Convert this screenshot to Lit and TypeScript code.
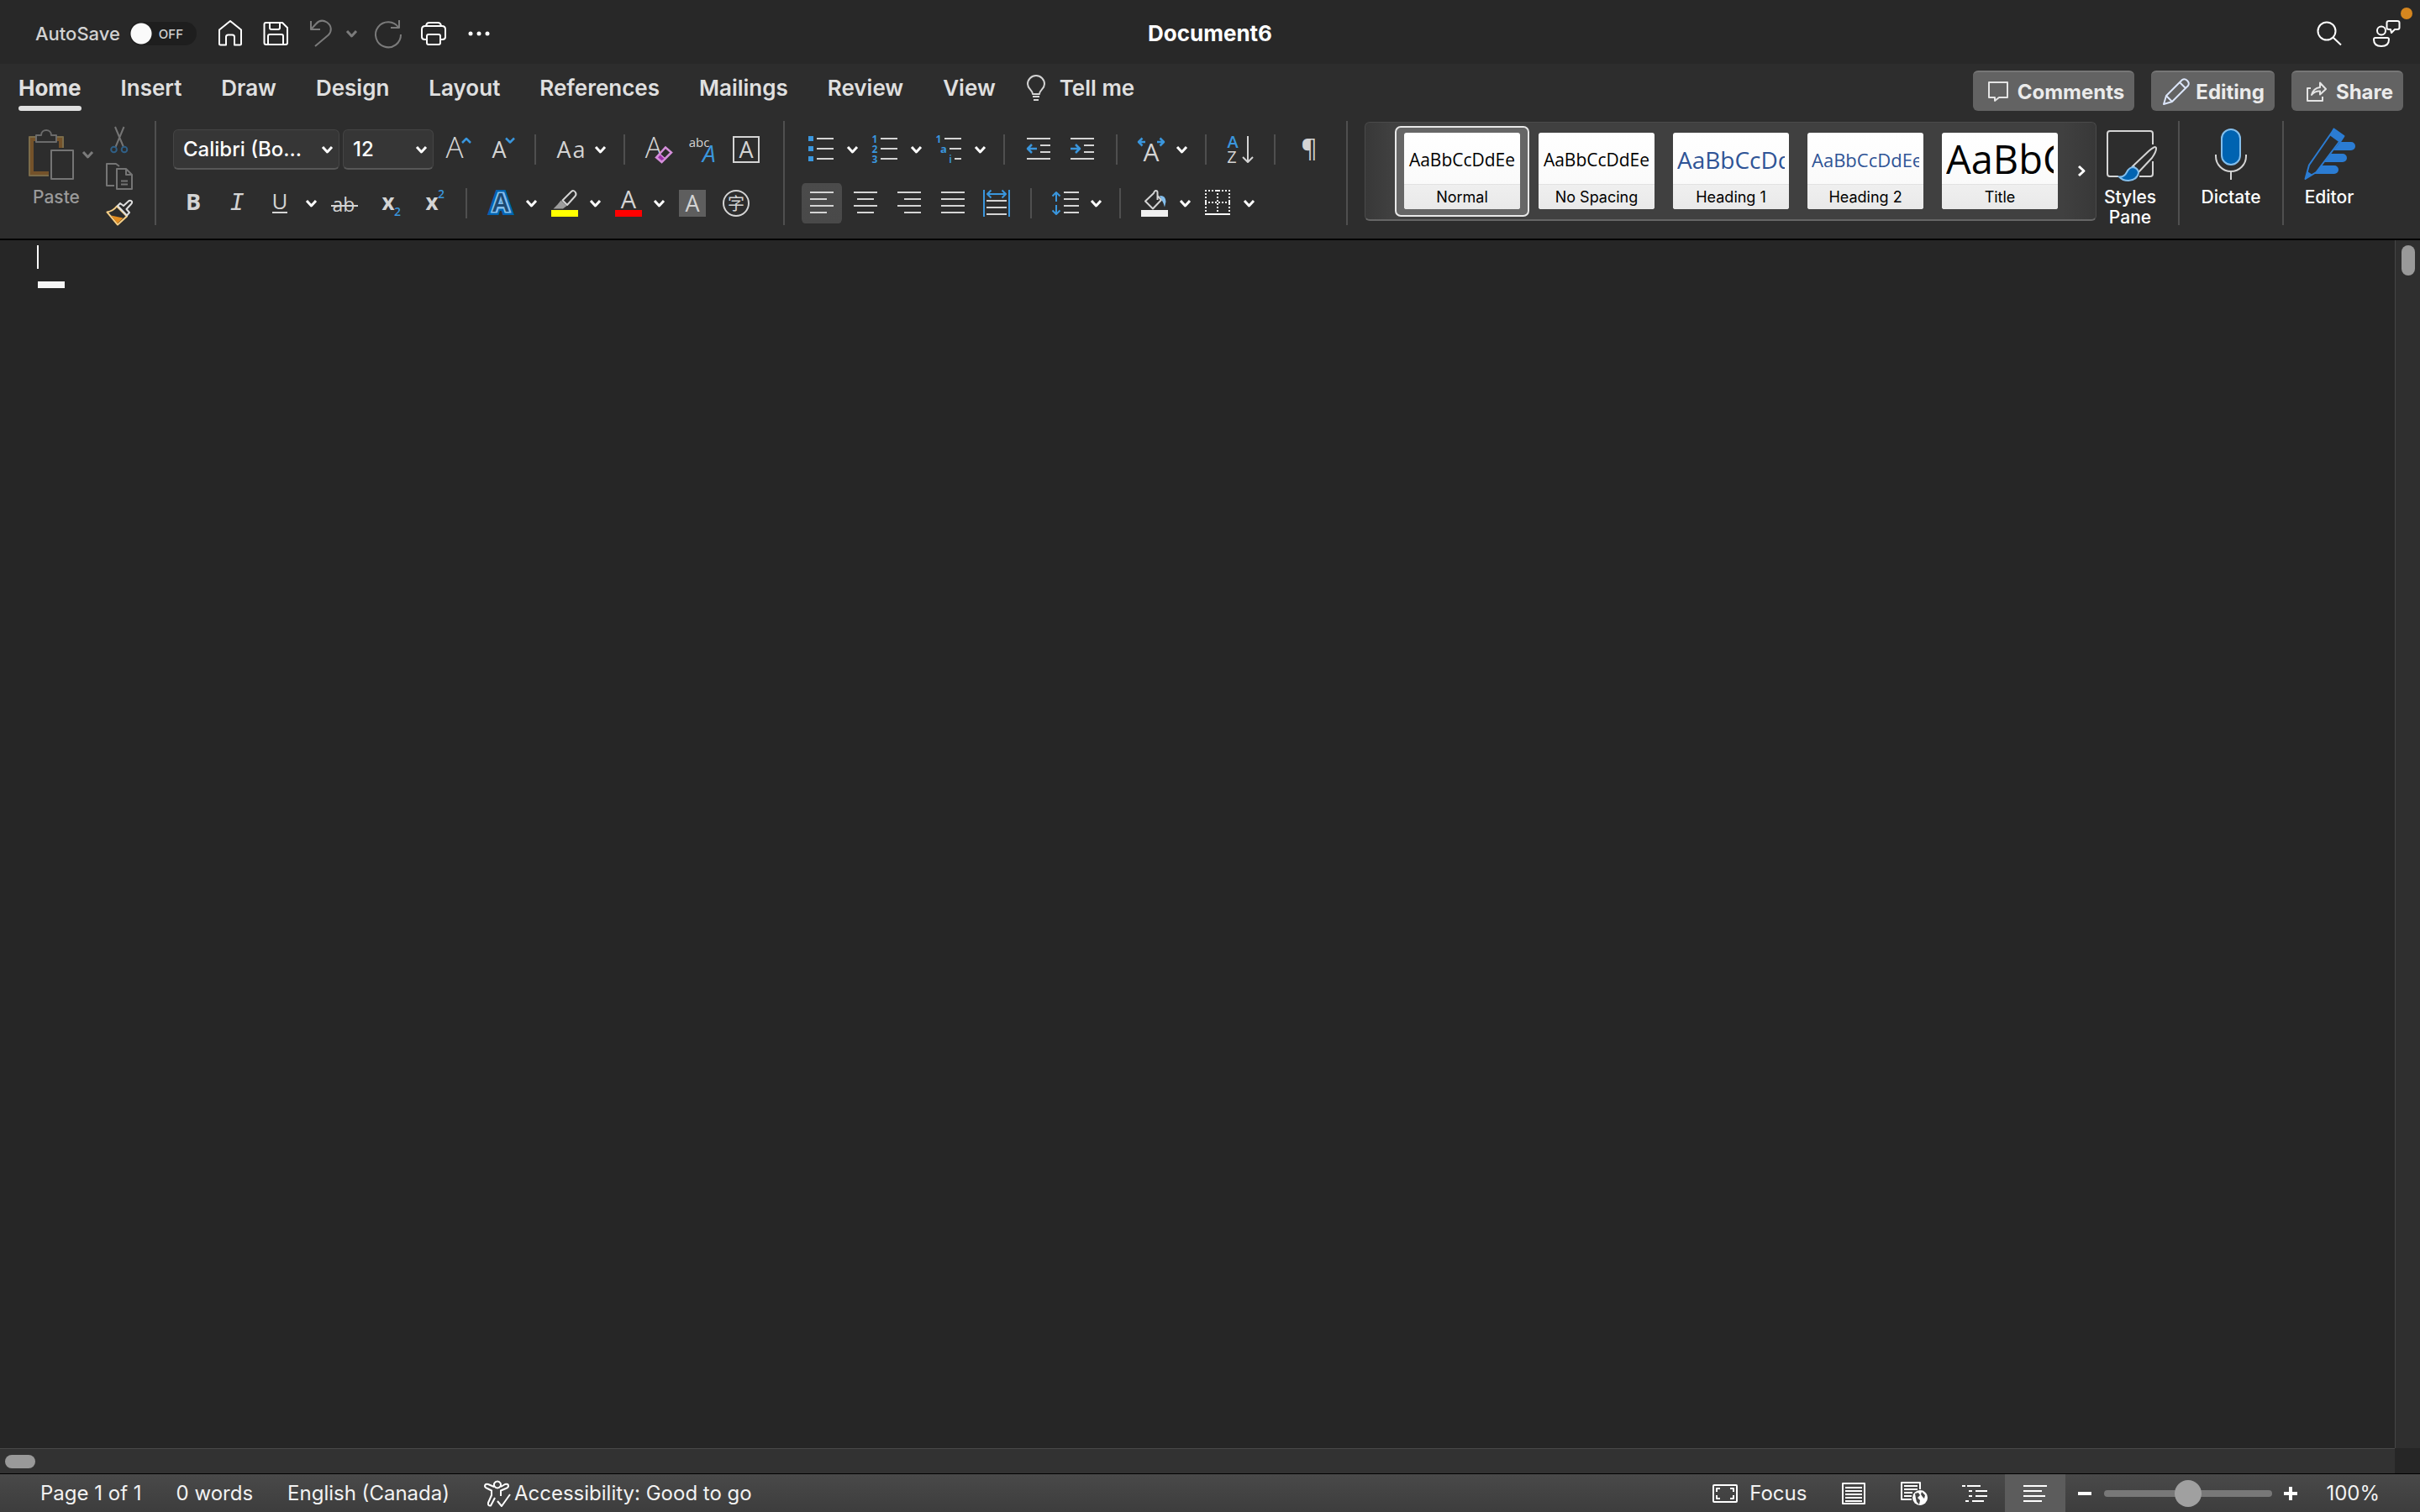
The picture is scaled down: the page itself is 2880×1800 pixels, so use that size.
import { LitElement, html, css, svg, nothing, type TemplateResult, type SVGTemplateResult } from "lit";
import { customElement, property, state } from "lit/decorators.js";
import { classMap } from "lit/directives/class-map.js";

const LIGHT = "#d4d4d4";
const BLUE = "#3a96dd";
const DIM = "#7b7b7b";

interface Glyph {
  w: number;
  h: number;
  body: SVGTemplateResult;
}

const glyph = (body: SVGTemplateResult, w = 32, h = 32): Glyph => ({ w, h, body });

const stroke = (d: string, color = LIGHT, width = 2) =>
  svg`<path d=${d} fill="none" stroke=${color} stroke-width=${width} stroke-linejoin="round"></path>`;

const letter = (t: string, x: number, y: number, size: number, color = LIGHT, weight = 400, anchor = "middle") =>
  svg`<text x=${x} y=${y} font-size=${size} fill=${color} font-weight=${weight} text-anchor=${anchor}>${t}</text>`;

const GLYPHS: Record<string, Glyph> = {
  home: glyph(stroke("M16 1L29 11.5V28Q29 29.5 27.5 29.5H21V20Q21 17.5 18.5 17.5H13.5Q11 17.5 11 20V29.5H4.5Q3 29.5 3 28V11.5Z", "#fff")),
  save: glyph(stroke("M4.500 3H24L30 9V27Q30 29 28 29H4.500Q2.500 29 2.500 27V5Q2.500 3 4.500 3ZM9 3V9Q9 11 11 11H19Q21 11 21 9V3M7 29V19Q7 17 9 17H23Q25 17 25 19V29", "#fff")),
  undo: glyph(stroke("M4 1V11H15M4 11L10 4.500C14 0 19 0 23 2.500C29 6.500 29 13 25 17.500L9 31", DIM)),
  redo: glyph(stroke("M29 0V9H19M28.500 9A15 15 0 1 0 31 17", DIM)),
  print: glyph(stroke("M8 23H5.500Q2 23 2 20V11Q2 7 6 7H26Q30 7 30 11V20Q30 23 26.500 23H24M7 7Q7.500 3 11 3H21Q24.500 3 25 7M10 17H22Q24 17 24 19V27Q24 29 22 29H10Q8 29 8 27V19Q8 17 10 17Z", "#fff")),
  more: glyph(svg`<g fill="#fff"><circle cx="6" cy="16" r="2.500"></circle><circle cx="16" cy="16" r="2.500"></circle><circle cx="26" cy="16" r="2.500"></circle></g>`),
  search: glyph(svg`<circle cx="13" cy="13" r="10.500" fill="none" stroke="#fff" stroke-width="2"></circle>${stroke("M20.500 20.500L30 29.500", "#fff", 2)}`),
  presence: glyph(svg`<circle cx="10" cy="12.500" r="5" fill="none" stroke="#fff" stroke-width="2"></circle>${stroke("M3 21H17Q19 21 19 23Q19 31 10 31Q1 31 1 23Q1 21 3 21ZM19 1H29Q31.500 1 31.500 3V9Q31.500 11 29 11H26L22 15L21 11H19Q16.500 11 16.500 9V3Q16.500 1 19 1Z", "#fff")}`),
  bulb: glyph(svg`${stroke("M8 23C8 18 2 17 2 11A10 10 0 0 1 22 11C22 17 16 18 16 23Z")}${stroke("M8 26H16M9 30H15", LIGHT, 2)}`, 24),
  comment: glyph(stroke("M1 1H23V19H13L8 23V19H1Z", "#e4e4e4"), 24, 24),
  pencil: glyph(stroke("M1 31L4 21L23 2Q26 0 29 3Q32 6 30 9L11 28ZM4 21L11 28M20 5L27 12", "#dce6fa")),
  share: glyph(stroke("M5 8H1V23H19V18M6 16Q8 8 16 7V1.500L23 9L16 15.500V11.500Q10 11 6 16Z", "#e4e4e4"), 24, 24),

  paste: glyph(svg`${stroke("M9 9H1V55H24M33 9H41V22", "#7b6c4a", 2)}
    <path d="M9 12H4V52H24M33 12H38V22" fill="none" stroke="#74522a" stroke-width="4"></path>
    ${stroke("M9 7H15C15 -1 27 -1 27 7H33V15H9Z", "#6b6b6b")}
    ${stroke("M27 25H53V59H27Z", "#757575")}`, 54, 60),
  cut: glyph(svg`${stroke("M11 1L21 25M21.500 1L11.500 25", "#757575")}
    <g fill="none" stroke="#2f5f86" stroke-width="2"><circle cx="9.500" cy="28" r="3.300"></circle><circle cx="22" cy="28" r="3.300"></circle></g>`),
  copy: glyph(stroke("M10 27H1V1H12L16 4M13 7H24L31 14V31H13ZM24 7V14H31M18 21.500H26M18 25.500H26", "#757575")),
  painter: glyph(svg`${stroke("M1.500 14.500Q9 13 13 7.500L25 19.500L14 29.500Z", "#f7cf86", 2)}
    <path d="M6 18.500L20.500 21.500L14 28Z" fill="#e28c1f"></path>
    <path d="M14 7L17 4L21 7L27.500 1Q30 0 31 2Q31.500 3.500 30 5L24.500 11L28 15L25 18.500Z" fill="#2d2d2d" stroke="#dedede" stroke-width="2" stroke-linejoin="round"></path>`),

  grow: glyph(svg`${letter("A", 13, 25.5, 35, LIGHT, 300)}${stroke("M22 8L27 3L32 8", BLUE, 2.5)}`),
  shrink: glyph(svg`${letter("A", 14, 25.5, 27)}${stroke("M22 2.500L27 7.500L32 2.500", BLUE, 2.5)}`),
  changeCase: glyph(svg`${letter("A", 9, 25.5, 27)}${letter("a", 27, 25.5, 27)}`),
  clear: glyph(svg`${letter("A", 10, 25.5, 34, LIGHT, 300)}
    <path d="M13 25.500L24 13.500L31 19.500L19.500 31Z" fill="#2d2d2d" stroke="#d58fdb" stroke-width="2.500"></path>
    <path d="M14 25.500L17.500 21.500L23.500 27L19.500 30Z" fill="#9b2fa8" stroke="#d58fdb" stroke-width="1.500"></path>`),
  phonetic: glyph(svg`${letter("abc", 12, 13, 15)}<text x="16" y="31" font-size="28" fill=${BLUE} font-style="italic">A</text>`),
  charBorder: glyph(svg`<rect x="1" y="1" width="30" height="30" fill="none" stroke=${LIGHT} stroke-width="2"></rect>${letter("A", 16, 25.5, 27)}`),
  bold: glyph(letter("B", 16, 24, 27, LIGHT, 700)),
  italic: glyph(svg`<text x="16" y="24" font-size="29" fill=${LIGHT} text-anchor="middle" font-style="italic" font-family="Liberation Mono">I</text>`),
  underline: glyph(svg`${letter("U", 15, 23, 26)}${stroke("M6 27H24")}`),
  strike: glyph(svg`${letter("ab", 15, 25.5, 23)}${stroke("M0 19H32")}`),
  sub: glyph(svg`${letter("x", 16, 24, 26, LIGHT, 700)}${letter("2", 27, 31, 14, BLUE, 600)}`),
  sup: glyph(svg`${letter("x", 16, 24, 26, LIGHT, 700)}${letter("2", 27, 10, 14, BLUE, 600)}`),
  effects: glyph(svg`<g font-size="30" font-weight="700" text-anchor="middle" stroke-linejoin="miter">
    <text x="16" y="26" fill="#0063b1" stroke="#0063b1" stroke-width="8">A</text>
    <text x="16" y="26" fill="#83beec" stroke="#83beec" stroke-width="3">A</text>
    <text x="16" y="26" font-weight="600" fill="#1d4a73">A</text></g>`),
  highlight: glyph(svg`<rect y="24" width="32" height="8" fill="#ffff00"></rect>
    ${stroke("M13.500 12.500L24 2Q26.500 0 28.500 2.500Q30.500 5 28.500 7.500L19 18Z")}
    <path d="M11.500 12.500L18.500 19L14 22.500H2.500L7.500 17.500Z" fill="#9c9c9c"></path>`),
  fontColor: glyph(svg`<rect y="24" width="32" height="8" fill="#ff0000"></rect>${letter("A", 16, 21.5, 29)}`),
  shadeChar: glyph(svg`<rect width="32" height="32" fill="#5e5e5e"></rect>${letter("A", 16, 25.5, 27)}`),
  enclose: glyph(svg`<circle cx="16" cy="16" r="15" fill="none" stroke=${LIGHT} stroke-width="2"></circle>
    <text x="16" y="23.500" font-size="20" fill=${LIGHT} text-anchor="middle" font-family="Noto Sans CJK SC">字</text>`),

  bullets: glyph(svg`<path d="M0 0h6v6h-6zM0 12h6v6h-6zM0 24h6v6h-6z" fill=${BLUE}></path>${stroke("M10 3H30M10 15H30M10 27H30")}`),
  numbers: glyph(svg`${letter("1", 3, 8, 12, BLUE, 700)}${letter("2", 3, 20, 12, BLUE, 700)}${letter("3", 3, 32, 12, BLUE, 700)}${stroke("M10 3H30M10 15H30M10 27H30")}`),
  multilevel: glyph(svg`${letter("1", 3, 8, 12, BLUE, 700)}${letter("a", 9, 20, 13, BLUE, 700)}${letter("i", 17, 32, 13, BLUE, 600)}${stroke("M10 3H30M16 15H30M22 27H30")}`),
  outdent: glyph(svg`${stroke("M2 3H30M18 11H30M18 19H30M2 27H30")}${stroke("M14 15H3M8 10L3 15L8 20", BLUE, 2.5)}`),
  indent: glyph(svg`${stroke("M2 3H30M18 11H30M18 19H30M2 27H30")}${stroke("M2 15H13M8 10L13 15L8 20", BLUE, 2.5)}`),
  asian: glyph(svg`${letter("A", 16, 30, 30)}${stroke("M9 7H1.500M5.500 2.500L1 7L5.500 11.500M23 7H30.500M26.500 2.500L31 7L26.500 11.500", BLUE, 2.5)}`),
  sort: glyph(svg`${letter("A", 7, 14, 20, BLUE, 600)}${letter("Z", 6, 32, 20)}${stroke("M25 0V31M19 25L25 31L31 25")}`),
  marks: glyph(letter("¶", 16, 25, 30)),
  left: glyph(stroke("M2 3H30M2 11H22M2 19H30M2 27H22")),
  center: glyph(stroke("M2 3H30M6 11H26M2 19H30M6 27H26")),
  right: glyph(stroke("M2 3H30M10 11H30M2 19H30M10 27H30")),
  justify: glyph(stroke("M2 3H30M2 11H30M2 19H30M2 27H30")),
  distribute: glyph(svg`${stroke("M4 13H28M4 21H28M4 29H28")}${stroke("M1 0V32M31 0V32M5 5H27M9.500 0.500L5 5L9.500 9.500M22.500 0.500L27 5L22.500 9.500", BLUE)}`),
  spacing: glyph(svg`${stroke("M14 3H32M14 11H32M14 19H32M14 27H32")}${stroke("M5 14V3M0.500 7.500L5 3L9.500 7.500M5 18V29M0.500 24.500L5 29L9.500 24.500", BLUE)}`),
  shading: glyph(svg`<rect y="24" width="32" height="8" fill="#f0f0f0"></rect>
    ${stroke("M19.500 12V3Q19.500 1 17.500 1Q16 1 15 4L5 13.500L14 22.500L24 12L19.500 7")}
    <path d="M22 7Q29 6 29.500 14L28 20.500Q26.500 15 24.500 12Z" fill="#83beec"></path>`),
  borders: glyph(svg`<path d="M0 1H30M0 15H30M1 0V28M15 0V28M29 0V28" fill="none" stroke="#f0f0f0" stroke-width="2" stroke-dasharray="2 2"></path>${stroke("M0 29H30", "#fff")}`),

  stylesPane: glyph(svg`${stroke("M14 55H4Q1 55 1 52V4Q1 1 4 1H52Q55 1 55 4V17M55 37V52Q55 55 52 55H39")}
    ${stroke("M30 44L50 25Q58 18 59 21Q59.500 25 54 33L38 50M32 43L38 50")}
    <path d="M15 55.500Q21 56 24 50Q27 44 32 44Q38 46 38 51Q36 59.500 26 60Q19 60 15 55.500Z" fill="#0063b1" stroke="#83beec" stroke-width="2"></path>`, 56, 60),
  mic: glyph(svg`<rect x="19" y="-1" width="22" height="42" rx="11" fill="#0063b1" stroke="#83beec" stroke-width="2"></rect>${stroke("M12 29V31A18 18 0 0 0 48 31V29M30 49V59")}`, 60, 60),
  editor: glyph(svg`<g fill="#2b7cd3"><path d="M43 14H56A5 5 0 0 1 56 24H35ZM32 28H46A5 5 0 0 1 46 38H24ZM21 42H36A5 5 0 0 1 36 52H11Z"></path></g>
    <path d="M34 2L6 41.500L2 57.500L14.500 50L43 13L33 5" fill="#2d2d2d"></path>
    ${stroke("M35.500 -1L6 41.500L1.500 58L14.500 50L47 7", "#2b7cd3", 2)}
    <path d="M4 49L10 53L1 59Z" fill="#2b7cd3"></path>
    <path d="M35.500 -1.500L47.500 7L43 14L32 6Z" fill="#2b7cd3" stroke="#2b7cd3" stroke-width="2" stroke-linejoin="round"></path>`, 60, 60),

  access: glyph(stroke("M16 1.500A4 4 0 1 1 15.900 1.500M12 8L5 5Q1.500 4 1 7Q1 9 4 10L9 12.500V18L5 27Q4.500 31 8 30.500L13 21M20 8L25 5Q29 4 29 7Q29 9 26 10L20 12.500V19M16 25L21 31L31 17", "#fff")),
  focus: glyph(svg`<rect x="1" y="2" width="28" height="20" rx="1" fill="none" stroke="#fff" stroke-width="2"></rect>${stroke("M5 10V6H9M21 6H25V10M25 14V18H21M9 18H5V14", "#fff")}`, 30, 24),
  pageView: glyph(stroke("M1 1H27V25H1ZM4 6H24M4 10H24M4 14H24M4 18H24M4 22H24", "#fff"), 28, 26),
  webView: glyph(svg`${stroke("M13 21H1V1H23V9M4 5H20M4 9H20M4 13H14M4 17H13", "#fff")}
    <circle cx="23" cy="19" r="9" fill="#fff"></circle><path d="M17 14L21 13L23 16L20 19L23 22L22 27L19 24L18 20ZM25 12L29 16L28 20L26 18L24 15Z" fill="#444"></path>`, 32, 28),
  outlineView: glyph(stroke("M0 1H4M6 1H22M8 7H12M16 7H30M8 13H12M16 13H30M4 19H8M12 19H26", "#fff"), 30, 20),
  draftView: glyph(stroke("M0 1H28M0 7H22M0 13H26M0 19H22", "#fff"), 28, 20),
  minus: glyph(stroke("M1 8H17", "#fff", 4), 18, 16),
  plus: glyph(stroke("M0 8H16M8 0V16", "#fff", 4), 16, 16),
  next: glyph(stroke("M1 1L7 6.500L1 12", "#fff", 3), 9, 13),
};

/** Draws one named glyph at its natural size. */
@customElement("word-icon")
export class WordIcon extends LitElement {
  @property() name = "";

  static styles = css`
    :host { display: block; flex: none; }
    .glyph { display: block; overflow: visible; font-family: "Open Sans", "Noto Sans", sans-serif; }
  `;

  render() {
    const g = GLYPHS[this.name];
    if (!g) return nothing;
    return html`<svg class="glyph" width=${g.w} height=${g.h} viewBox="0 0 ${g.w} ${g.h}" aria-hidden="true">${g.body}</svg>`;
  }
}

/** The small arrow of a drop-down control. */
@customElement("word-chevron")
export class WordChevron extends LitElement {
  static styles = css`
    :host { display: block; flex: none; color: #fff; }
    .glyph { display: block; overflow: visible; }
  `;

  render() {
    return html`<svg class="glyph" width="12" height="10" viewBox="0 0 12 10" aria-hidden="true">
      <path d="M1 2L6.500 8L12 2" fill="none" stroke="currentColor" stroke-width="3" stroke-linejoin="round"></path></svg>`;
  }
}

interface Command {
  icon: string;
  label: string;
  menu?: boolean;
  pressed?: boolean;
}

const cmd = (icon: string, label: string): Command => ({ icon, label });
const menu = (icon: string, label: string): Command => ({ icon, label, menu: true });

const TABS = ["Home", "Insert", "Draw", "Design", "Layout", "References", "Mailings", "Review", "View"];

const FONT_TOP = [
  [cmd("grow", "Increase font size"), cmd("shrink", "Decrease font size")],
  [menu("changeCase", "Change case")],
  [cmd("clear", "Clear formatting"), cmd("phonetic", "Phonetic guide"), cmd("charBorder", "Character border")],
];
const FONT_BOTTOM = [
  [cmd("bold", "Bold"), cmd("italic", "Italic"), menu("underline", "Underline"), cmd("strike", "Strikethrough"), cmd("sub", "Subscript"), cmd("sup", "Superscript")],
  [menu("effects", "Text effects"), menu("highlight", "Highlight"), menu("fontColor", "Font color"), cmd("shadeChar", "Character shading"), cmd("enclose", "Enclose characters")],
];
const PARA_TOP = [
  [menu("bullets", "Bullets"), menu("numbers", "Numbering"), menu("multilevel", "Multilevel list")],
  [cmd("outdent", "Decrease indent"), cmd("indent", "Increase indent")],
  [menu("asian", "Asian layout")],
  [cmd("sort", "Sort")],
  [cmd("marks", "Show formatting marks")],
];
const PARA_BOTTOM = [
  [
    { icon: "left", label: "Align left", pressed: true },
    cmd("center", "Center"), cmd("right", "Align right"), cmd("justify", "Justify"), cmd("distribute", "Distribute"),
  ],
  [menu("spacing", "Line spacing")],
  [menu("shading", "Shading"), menu("borders", "Borders")],
];

const STYLES = [
  { name: "Normal", sample: "AaBbCcDdEe", look: "body" },
  { name: "No Spacing", sample: "AaBbCcDdEe", look: "body" },
  { name: "Heading 1", sample: "AaBbCcDdEe", look: "h1" },
  { name: "Heading 2", sample: "AaBbCcDdEe", look: "h2" },
  { name: "Title", sample: "AaBbCcDdEe", look: "title" },
];

const VIEWS = [cmd("pageView", "Print layout"), cmd("webView", "Web layout"), cmd("outlineView", "Outline"), cmd("draftView", "Draft")];

@customElement("app-root")
export class AppRoot extends LitElement {
  @state() private tab = "Home";
  @state() private style_ = "Normal";
  @state() private view = "draftView";
  @state() private autosave = false;

  static styles = css`
    :host {
      display: flex;
      flex-direction: column;
      min-height: 100vh;
      background: #262626;
      color: #e0e0e0;
      font-family: Inter, "Liberation Sans", sans-serif;
      font-size: 24px;
    }
    * { box-sizing: border-box; }
    button, select, input { font: inherit; color: inherit; margin: 0; }
    button { display: flex; align-items: center; padding: 0; border: 0; background: none; }

    .titlebar {
      display: grid;
      grid-template-columns: 1fr auto 1fr;
      align-items: center;
      height: 76px;
      padding: 4px 24px 0;
      background: #282828;
    }
    .quick { display: flex; align-items: center; gap: 22px; padding-left: 18px; }
    .autosave { display: grid; grid-template-columns: 112px 80px; align-items: center; color: #d2d2d2; font-size: 22px; font-weight: 500; margin-right: 2px; }
    .switch {
      appearance: none;
      grid-area: 1 / 2;
      width: 80px;
      height: 28px;
      border-radius: 14px;
      background: radial-gradient(circle at 14px 14px, #fafafa 12px, transparent 13px), #1e1e1e;
    }
    .switch:checked { background: radial-gradient(circle at 66px 14px, #fafafa 12px, transparent 13px), #2b7cd3; }
    .off { grid-area: 1 / 2; justify-self: end; padding-right: 16px; font-size: 15px; pointer-events: none; }
    .undo { display: flex; align-items: center; gap: 14px; }
    .undo word-chevron, .dim word-chevron { color: #7b7b7b; }
    .docname { margin: 0; color: #fff; font-size: 26px; line-height: 32px; font-weight: 700; }
    .account { display: flex; justify-content: flex-end; gap: 36px; }
    .presence { position: relative; }
    .badge { position: absolute; top: -15px; right: -15px; width: 14px; height: 14px; border-radius: 7px; background: #d5861e; }

    .tabbar { display: flex; align-items: flex-start; height: 64px; padding: 0 20px 0 22px; background: #2d2d2d; }
    .tabs { display: flex; gap: 47px; }
    .tab { flex-direction: column; gap: 5px; padding-top: 13px; font-size: 26px; line-height: 32px; font-weight: 600; }
    .tab::after { content: ""; width: 100%; height: 6px; border-radius: 3px; }
    .tab.current { font-weight: 700; }
    .tab.current::after { background: #e0e0e0; }
    .tellme { gap: 16px; margin-left: 36px; padding-top: 13px; font-size: 26px; line-height: 32px; font-weight: 600; }
    .actions { display: flex; gap: 20px; margin: 8px 0 0 auto; }
    .action {
      height: 48px;
      gap: 11px;
      padding: 0 12px 0 18px;
      border-top: 2px solid #777;
      border-radius: 6px;
      background: #636363;
      color: #ebebeb;
      font-size: 24px;
      font-weight: 700;
    }
    .action.snug { gap: 7px; padding-left: 14px; }

    .ribbon { display: flex; height: 146px; padding: 4px 0 16px; border-bottom: 2px solid #000; background: #2d2d2d; }
    .rule { flex: none; width: 2px; background: #4f4f4f; }
    .clipboard { display: flex; gap: 16px; padding: 6px 26px 0 34px; }
    .paste { flex-direction: column; align-items: flex-start; gap: 9px; padding-top: 4px; color: #9a9a9a; font-size: 21px; line-height: 24px; font-weight: 500; justify-content: flex-start; }
    .paste-top { display: flex; align-items: center; gap: 10px; }
    .paste-label { width: 66px; text-align: center; }
    .stack { display: flex; flex-direction: column; gap: 12px; }
    .group { display: flex; flex-direction: column; gap: 16px; padding: 10px 18px 0; }
    .row { display: flex; align-items: center; height: 48px; }
    .cluster { display: flex; }
    .sep { width: 2px; height: 36px; margin: 0 14px; background: #4f4f4f; }
    .tool { height: 48px; padding: 0 10px; gap: 14px; border-radius: 6px; }
    .tool.menu { padding-right: 8px; }
    .tool.pressed { background: linear-gradient(#4b4b4b, #494949); background-clip: content-box; padding: 0 2px; }
    .tool.pressed word-icon { margin: 8px; }

    .combo { display: grid; align-items: center; }
    .combo select {
      appearance: none;
      grid-area: 1 / 1;
      width: 100%;
      height: 48px;
      padding: 0 32px 0 11px;
      border: 1px solid #454545;
      border-bottom: 2px solid #575757;
      border-radius: 6px;
      background: #363636;
      color: #fff;
      font-size: 24px;
      font-weight: 500;
    }
    .combo word-chevron { grid-area: 1 / 1; justify-self: end; padding-right: 9px; pointer-events: none; }
    .combo.font { width: 198px; margin: 0 4px 0 2px; }
    .combo.size { width: 108px; margin-right: 2px; }

    .gallery {
      display: flex;
      flex: 1;
      min-width: 0;
      height: 118px;
      margin: 1px 0 0 20px;
      padding-left: 35px;
      align-items: center;
      border: 1px solid #4a4a4a;
      border-bottom: 2px solid #666;
      border-radius: 6px;
      background: linear-gradient(90deg, #383838, #404040 30px, #404040 830px, #383838);
    }
    .style { width: 160px; height: 108px; padding: 7px 9px; border: 2px solid transparent; border-radius: 7px; flex: none; }
    .style.chosen { border-color: #e8e8e8; background: #666; }
    .card { display: grid; grid-template-rows: 61px 30px; width: 138px; border-radius: 3px; background: linear-gradient(#fff, #f8f8f8); color: #000; overflow: hidden; font-size: 18px; }
    .sample { display: flex; align-items: center; margin: 0 5px; padding-top: 2px; overflow: hidden; font-family: "Open Sans", "Noto Sans", sans-serif; white-space: nowrap; }
    .sample.body { justify-content: center; font-size: 21px; }
    .sample.h1 { font-size: 28px; color: #2f5496; }
    .sample.h2 { font-size: 22px; color: #2f5496; }
    .sample.title { padding-top: 0; font-size: 47px; }
    .caption { display: grid; place-items: center; border-top: 1px solid #e2e2e2; background: linear-gradient(#efefef, #e9e9e9); }
    .next { flex: 1; align-self: stretch; justify-content: center; }

    .big { flex-direction: column; justify-content: flex-start; gap: 8px; padding-top: 11px; color: #fff; font-size: 21px; line-height: 24px; font-weight: 500; }
    .big.pane { width: 80px; margin-right: 17px; }
    .big.dictate { width: 122px; }
    .big.editor { width: 108px; margin-right: 54px; }

    .workspace { display: grid; flex: 1; grid-template-columns: minmax(0, 1fr) 30px; grid-template-rows: minmax(0, 1fr) 30px; }
    .page { padding: 6px 0 0 44px; outline: none; }
    .caret { width: 2px; height: 28px; background: #fff; }
    .endmark { width: 32px; height: 8px; margin: 15px 0 0 1px; background: #f5f5f5; }
    .vscroll { padding: 6px 6px 0 7px; border-left: 1px solid #454545; background: #2f2f2f; }
    .hscroll { padding: 7px 0 0 6px; border-top: 1px solid #484848; background: #323232; }
    .vscroll .thumb { width: 16px; height: 36px; border-radius: 8px; background: #999; }
    .hscroll .thumb { width: 36px; height: 16px; border-radius: 8px; background: #999; }

    .status { display: flex; align-items: center; height: 46px; padding: 0 48px; border-top: 1px solid #000; background: linear-gradient(#494949, #3d3d3d); color: #f2f2f2; }
    .facts { display: flex; align-items: center; gap: 41px; }
    .fact { gap: 4px; }
    .focus { gap: 14px; margin: 0 20px 0 auto; }
    .views { display: flex; align-self: stretch; }
    .view { width: 72px; justify-content: center; }
    .view.on { background: #5c5c5c; }
    .zoom { display: flex; align-items: center; gap: 14px; margin-left: 14px; }
    .zoom input { appearance: none; width: 200px; height: 32px; background: none; }
    .zoom input::-webkit-slider-runnable-track { height: 8px; border-radius: 4px; background: #787878; }
    .zoom input::-webkit-slider-thumb { appearance: none; width: 32px; height: 32px; margin-top: -12px; border-radius: 16px; background: #a0a0a0; }
    .percent { margin-left: 34px; }
  `;

  private tool(c: Command): TemplateResult {
    return html`<button class=${classMap({ tool: true, menu: !!c.menu, pressed: !!c.pressed })} aria-label=${c.label}>
      <word-icon name=${c.icon}></word-icon>${c.menu ? html`<word-chevron></word-chevron>` : nothing}
    </button>`;
  }

  private clusters(list: Command[][]): TemplateResult[] {
    return list.map((cluster, i) => html`${i ? html`<span class="sep"></span>` : nothing}
      <div class="cluster">${cluster.map((c) => this.tool(c))}</div>`);
  }

  private quick(icon: string, label: string) {
    return html`<button aria-label=${label}><word-icon name=${icon}></word-icon></button>`;
  }

  render() {
    return html`
      <header class="titlebar">
        <div class="quick">
          <label class="autosave">AutoSave
            <input class="switch" type="checkbox" .checked=${this.autosave}
              @change=${(e: Event) => (this.autosave = (e.target as HTMLInputElement).checked)} />
            <span class="off">${this.autosave ? nothing : "OFF"}</span>
          </label>
          ${this.quick("home", "Home")} ${this.quick("save", "Save")}
          <button class="undo" aria-label="Undo"><word-icon name="undo"></word-icon><word-chevron></word-chevron></button>
          ${this.quick("redo", "Redo")} ${this.quick("print", "Print")} ${this.quick("more", "More commands")}
        </div>
        <h1 class="docname">Document6</h1>
        <div class="account">
          ${this.quick("search", "Search")}
          <button class="presence" aria-label="Account"><word-icon name="presence"></word-icon><span class="badge"></span></button>
        </div>
      </header>

      <div class="tabbar">
        <nav class="tabs">
          ${TABS.map((t) => html`<button class=${classMap({ tab: true, current: t === this.tab })} @click=${() => (this.tab = t)}>${t}</button>`)}
        </nav>
        <button class="tellme"><word-icon name="bulb"></word-icon>Tell me</button>
        <div class="actions">
          <button class="action"><word-icon name="comment"></word-icon>Comments</button>
          <button class="action snug"><word-icon name="pencil"></word-icon>Editing</button>
          <button class="action"><word-icon name="share"></word-icon>Share</button>
        </div>
      </div>

      <section class="ribbon">
        <div class="clipboard">
          <button class="paste dim">
            <span class="paste-top"><word-icon name="paste"></word-icon><word-chevron></word-chevron></span>
            <span class="paste-label">Paste</span>
          </button>
          <div class="stack">${this.quick("cut", "Cut")} ${this.quick("copy", "Copy")} ${this.quick("painter", "Format painter")}</div>
        </div>
        <span class="rule"></span>
        <div class="group">
          <div class="row">
            <label class="combo font"><select aria-label="Font"><option>Calibri (Bo...</option></select><word-chevron></word-chevron></label>
            <label class="combo size"><select aria-label="Font size"><option>12</option></select><word-chevron></word-chevron></label>
            ${this.clusters(FONT_TOP)}
          </div>
          <div class="row">${this.clusters(FONT_BOTTOM)}</div>
        </div>
        <span class="rule"></span>
        <div class="group">
          <div class="row">${this.clusters(PARA_TOP)}</div>
          <div class="row">${this.clusters(PARA_BOTTOM)}</div>
        </div>
        <span class="rule"></span>
        <div class="gallery">
          ${STYLES.map((s) => html`<button class=${classMap({ style: true, chosen: s.name === this.style_ })} @click=${() => (this.style_ = s.name)}>
            <span class="card"><span class="sample ${s.look}">${s.sample}</span><span class="caption">${s.name}</span></span>
          </button>`)}
          <button class="next" aria-label="More styles"><word-icon name="next"></word-icon></button>
        </div>
        <button class="big pane"><word-icon name="stylesPane"></word-icon><span>Styles<br />Pane</span></button>
        <span class="rule"></span>
        <button class="big dictate"><word-icon name="mic"></word-icon>Dictate</button>
        <span class="rule"></span>
        <button class="big editor"><word-icon name="editor"></word-icon>Editor</button>
      </section>

      <div class="workspace">
        <main class="page" role="textbox" aria-label="Document" tabindex="0"><div class="caret"></div><div class="endmark"></div></main>
        <div class="vscroll"><div class="thumb"></div></div>
        <div class="hscroll"><div class="thumb"></div></div>
      </div>

      <footer class="status">
        <div class="facts">
          <button class="fact">Page 1 of 1</button>
          <button class="fact">0 words</button>
          <button class="fact">English (Canada)</button>
          <button class="fact"><word-icon name="access"></word-icon>Accessibility: Good to go</button>
        </div>
        <button class="focus"><word-icon name="focus"></word-icon>Focus</button>
        <div class="views">
          ${VIEWS.map((v) => html`<button class=${classMap({ view: true, on: v.icon === this.view })} aria-label=${v.label} @click=${() => (this.view = v.icon)}>
            <word-icon name=${v.icon}></word-icon></button>`)}
        </div>
        <div class="zoom">
          ${this.quick("minus", "Zoom out")}
          <input type="range" min="0" max="200" value="100" aria-label="Zoom" />
          ${this.quick("plus", "Zoom in")}
        </div>
        <button class="percent">100%</button>
      </footer>
    `;
  }
}
